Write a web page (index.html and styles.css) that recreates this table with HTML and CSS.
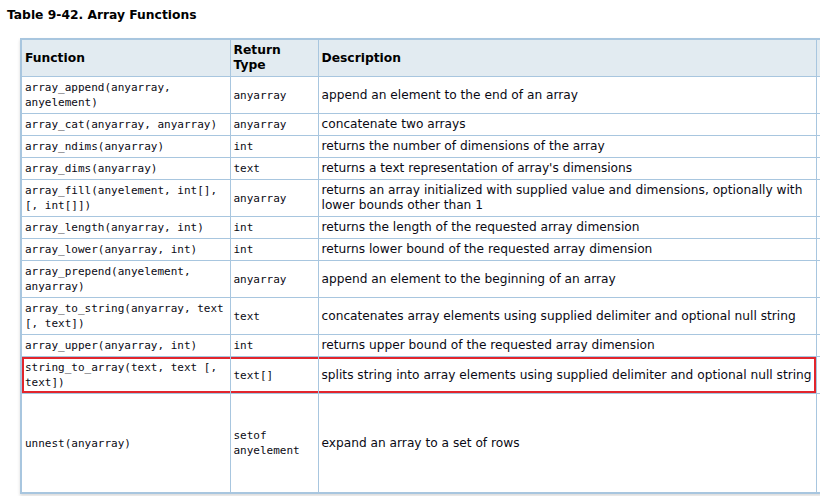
FILE: index.html
```html
<!DOCTYPE html>
<html>
<head>
<meta charset="utf-8">
<link rel="stylesheet" href="styles.css">
</head>
<body>
<p class="title">Table 9-42. Array Functions</p>
<table class="tbl">
  <colgroup>
    <col class="c1"><col class="c2"><col class="c3"><col class="c4">
  </colgroup>
  <thead>
    <tr class="head"><th>Function</th><th>Return Type</th><th>Description</th><th></th></tr>
  </thead>
  <tbody>
    <tr class="r2"><td class="code">array_append(anyarray, anyelement)</td><td class="code">anyarray</td><td>append an element to the end of an array</td><td></td></tr>
    <tr class="r1"><td class="code">array_cat(anyarray, anyarray)</td><td class="code">anyarray</td><td>concatenate two arrays</td><td></td></tr>
    <tr class="r1"><td class="code">array_ndims(anyarray)</td><td class="code">int</td><td>returns the number of dimensions of the array</td><td></td></tr>
    <tr class="r1"><td class="code">array_dims(anyarray)</td><td class="code">text</td><td>returns a text representation of array's dimensions</td><td></td></tr>
    <tr class="r2"><td class="code">array_fill(anyelement, int[], [, int[]])</td><td class="code">anyarray</td><td>returns an array initialized with supplied value and dimensions, optionally with lower bounds other than 1</td><td></td></tr>
    <tr class="r1"><td class="code">array_length(anyarray, int)</td><td class="code">int</td><td>returns the length of the requested array dimension</td><td></td></tr>
    <tr class="r1"><td class="code">array_lower(anyarray, int)</td><td class="code">int</td><td>returns lower bound of the requested array dimension</td><td></td></tr>
    <tr class="r2"><td class="code">array_prepend(anyelement, anyarray)</td><td class="code">anyarray</td><td>append an element to the beginning of an array</td><td></td></tr>
    <tr class="r2"><td class="code">array_to_string(anyarray, text [, text])</td><td class="code">text</td><td>concatenates array elements using supplied delimiter and optional null string</td><td></td></tr>
    <tr class="r1"><td class="code">array_upper(anyarray, int)</td><td class="code">int</td><td>returns upper bound of the requested array dimension</td><td></td></tr>
    <tr class="r2 hl"><td class="code hl-first">string_to_array(text, text [, text])</td><td class="code hl-mid">text[]</td><td class="nowrap hl-last">splits string into array elements using supplied delimiter and optional null string</td><td></td></tr>
    <tr class="tall"><td class="code">unnest(anyarray)</td><td class="code">setof anyelement</td><td>expand an array to a set of rows</td><td></td></tr>
  </tbody>
</table>
</body>
</html>
```
FILE: styles.css
```css
html, body {
  margin: 0;
  padding: 0;
  background: #ffffff;
  overflow: hidden;
}
body {
  font-family: "DejaVu Sans", Verdana, sans-serif;
  color: #000000;
  width: 820px;
  height: 496px;
}
.title {
  margin: 0;
  padding: 7px 0 0 7px;
  font-size: 12.3px;
  font-weight: bold;
  line-height: 16px;
  height: 31px;
  box-sizing: border-box;
  white-space: nowrap;
}
.tbl {
  margin-left: 20px;
  margin-top: 7px;
  border-collapse: collapse;
  table-layout: fixed;
  width: 806px;
  border: 2px solid #a8c6df;
  box-shadow: 0 2px 3px rgba(0, 0, 0, 0.15);
}
.c1 { width: 209px; }
.c2 { width: 88px; }
.c3 { width: 498px; }
.c4 { width: 10px; }
th, td {
  border: 1px solid #a8c6df;
  padding: 0 3px;
  vertical-align: middle;
  text-align: left;
  line-height: 15px;
}
th {
  background: #e2ebf1;
  font-weight: bold;
  font-size: 12.3px;
  line-height: 15px;
}
.head th { height: 36px; }
td {
  font-size: 12.2px;
  color: #0a0a14;
}
.code {
  font-family: "DejaVu Sans Mono", "Liberation Mono", monospace;
  font-size: 11px;
}
.r1 td { height: 21px; }
.r2 td { height: 36px; }
.tall td { height: 98px; }
.hl-first {
  box-shadow: inset 2px 2px 0 #e2252c, inset 0 -2px 0 #e2252c;
}
.hl-mid {
  box-shadow: inset 0 2px 0 #e2252c, inset 0 -2px 0 #e2252c;
}
.hl-last {
  box-shadow: inset -2px 2px 0 #e2252c, inset 0 -2px 0 #e2252c;
}
.nowrap { white-space: nowrap; }
```
